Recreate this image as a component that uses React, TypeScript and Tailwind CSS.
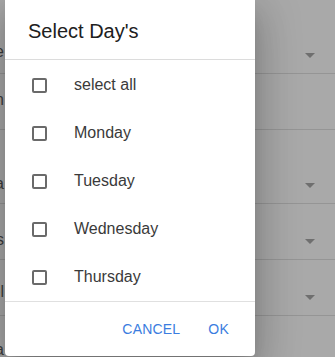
import { useState } from "react";

const DAYS = ["select all", "Monday", "Tuesday", "Wednesday", "Thursday"];

// rows of the form that sits behind the dimmed overlay
const BG_ROWS = [
  { h: "h-[74px]", label: "Name", labelPad: "pt-[42px]", arrow: "pt-[53px]" },
  { h: "h-[56px]", label: "Time in", labelPad: "pt-[16px]", arrow: null },
  { h: "h-[74px]", label: "Area", labelPad: "pt-[44px]", arrow: "pt-[53px]" },
  { h: "h-[56px]", label: "Class", labelPad: "pt-[26px]", arrow: "pt-[35px]" },
  { h: "h-[56px]", label: "Level", labelPad: "pt-[22px]", arrow: "pt-[35px]" },
  { h: "h-[41px]", label: "Data", labelPad: "pt-[24px]", arrow: null },
];

function Arrow() {
  return (
    <svg width="10" height="5" viewBox="0 0 10 5" className="block">
      <path d="M0 0h10L5 5z" fill="#6f6f6f" />
    </svg>
  );
}

export default function App() {
  const [checked, setChecked] = useState<Record<string, boolean>>({});

  return (
    <div
      className="relative h-[357px] w-[335px] overflow-hidden bg-[#a9a9a9]"
      style={{ fontFamily: '"Liberation Sans", Arial, sans-serif' }}
    >
      {/* page behind the dialog */}
      <div className="flex flex-col">
        {BG_ROWS.map((r, i) => (
          <div key={i} className={`flex ${r.h} border-b border-[#959595] last:border-b-0`}>
            <div className={`-ml-[56px] w-[60px] shrink-0 whitespace-nowrap text-right text-[16px] leading-[20px] text-[#3d3d3d] ${r.labelPad}`}>
              {r.label}
            </div>
            <div className="flex-1" />
            {r.arrow && (
              <div className={`mr-[20px] ${r.arrow}`}>
                <Arrow />
              </div>
            )}
          </div>
        ))}
      </div>

      {/* dialog */}
      <div className="absolute left-[5px] top-[-4px] flex h-[360px] w-[250px] flex-col rounded-[4px] bg-white shadow-[0_11px_15px_-7px_rgba(0,0,0,0.2),0_24px_38px_3px_rgba(0,0,0,0.14),0_9px_46px_8px_rgba(0,0,0,0.12)]">
        <div className="flex h-[64px] shrink-0 items-center border-b border-[#dcdcdc] pl-[23px] pt-[7px]">
          <h2 className="text-[20px] font-normal leading-[24px] text-[#202020]">Select Day's</h2>
        </div>

        <div className="flex flex-col pt-[1px]">
          {DAYS.map((d) => (
            <label key={d} className="flex h-[48px] cursor-pointer items-center">
              <span className="ml-[27px] flex h-[15px] w-[15px] items-center justify-center rounded-[2px] border-2 border-[#6a6a6a]">
                {checked[d] && <span className="h-[7px] w-[7px] bg-[#6a6a6a]" />}
              </span>
              <input
                type="checkbox"
                className="hidden"
                checked={!!checked[d]}
                onChange={() => setChecked((c) => ({ ...c, [d]: !c[d] }))}
              />
              <span className="ml-[27px] text-[16px] leading-[20px] text-[#3a3a3a]">{d}</span>
            </label>
          ))}
        </div>

        <div className="flex flex-1 items-center justify-end gap-[28px] border-t border-[#e0e0e0] pr-[26px]">
          <button className="text-[14px] leading-[16px] tracking-[0.2px] text-[#3b7de0]">CANCEL</button>
          <button className="text-[14px] leading-[16px] tracking-[0.2px] text-[#3b7de0]">OK</button>
        </div>
      </div>
    </div>
  );
}
